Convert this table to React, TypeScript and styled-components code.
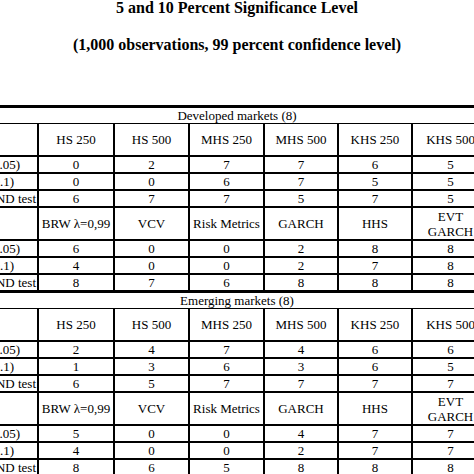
import React from "react";
import styled, { createGlobalStyle } from "styled-components";

const GlobalStyle = createGlobalStyle`
  html, body {
    margin: 0;
    padding: 0;
    overflow: hidden;
    background: #ffffff;
  }
  body {
    font-family: "Liberation Serif", "Times New Roman", serif;
    color: #000000;
  }
`;

const Page = styled.div`
  width: 474px;
  height: 474px;
  overflow: hidden;
`;

const Titles = styled.header`
  display: flex;
  flex-direction: column;
  align-items: center;
  gap: 21px;
  margin-bottom: 52px;
`;

const Title = styled.h1`
  margin: 0;
  font-size: 16px;
  line-height: 16px;
  font-weight: 700;
  white-space: nowrap;
`;

const Table = styled.table`
  border-collapse: separate;
  border-spacing: 0;
  table-layout: fixed;
  width: 488px;
  border-top: 2px solid #000;
  font-size: 13px;
  line-height: 15px;
`;

const Group = styled.tbody`
  & > tr > td {
    box-sizing: border-box;
    padding: 0;
  }
`;

const GroupCell = styled.td`
  height: 17px;
  border-top: 1px solid #000;
  border-bottom: 1px solid #000;
  text-align: center;
  padding-right: 14px !important;
  white-space: nowrap;
`;

const Cell = styled.td<{ $head?: boolean; $tall?: boolean }>`
  height: ${(p) => (p.$head ? 33 : 17)}px;
  border-right: 2px solid #000;
  border-bottom: 2px solid #000;
  text-align: center;
  vertical-align: middle;
  white-space: nowrap;
  &:last-child {
    border-right: none;
  }
`;

const LabelClip = styled.div<{ $inset: number }>`
  display: flex;
  justify-content: flex-end;
  overflow: hidden;
  white-space: nowrap;
  padding-right: ${(p) => p.$inset}px;
`;

const columnWidths = [39, 76, 75, 75, 74, 74, 75];

const headA = ["HS 250", "HS 500", "MHS 250", "MHS 500", "KHS 250", "KHS 500"];
const headB: React.ReactNode[] = [
  "BRW λ=0,99",
  "VCV",
  "Risk Metrics",
  "GARCH",
  "HHS",
  <>
    EVT
    <br />
    GARCH
  </>,
];

const labels = [
  { text: "LR uc (α=0.05)", inset: 17 },
  { text: "LR uc (α=0.1)", inset: 23 },
  { text: "LR IND test", inset: 1 },
];

type Block = { values: number[][] };

const groups: { name: string; blocks: [Block, Block] }[] = [
  {
    name: "Developed markets (8)",
    blocks: [
      { values: [[0, 2, 7, 7, 6, 5], [0, 0, 6, 7, 5, 5], [6, 7, 7, 5, 7, 5]] },
      { values: [[6, 0, 0, 2, 8, 8], [4, 0, 0, 2, 7, 8], [8, 7, 6, 8, 8, 8]] },
    ],
  },
  {
    name: "Emerging markets (8)",
    blocks: [
      { values: [[2, 4, 7, 4, 6, 6], [1, 3, 6, 3, 6, 5], [6, 5, 7, 7, 7, 7]] },
      { values: [[5, 0, 0, 4, 7, 7], [4, 0, 0, 2, 7, 7], [8, 6, 5, 8, 8, 8]] },
    ],
  },
];

function BlockRows({ head, block }: { head: React.ReactNode[]; block: Block }) {
  return (
    <>
      <tr>
        <Cell $head />
        {head.map((h, i) => (
          <Cell $head key={i}>
            {h}
          </Cell>
        ))}
      </tr>
      {block.values.map((row, r) => (
        <tr key={r}>
          <Cell>
            <LabelClip $inset={labels[r].inset}>{labels[r].text}</LabelClip>
          </Cell>
          {row.map((v, i) => (
            <Cell key={i}>{v}</Cell>
          ))}
        </tr>
      ))}
    </>
  );
}

export default function App() {
  return (
    <Page>
      <GlobalStyle />
      <Titles>
        <Title>5 and 10 Percent Significance Level</Title>
        <Title>(1,000 observations, 99 percent confidence level)</Title>
      </Titles>
      <Table>
        <colgroup>
          {columnWidths.map((w, i) => (
            <col key={i} style={{ width: w }} />
          ))}
        </colgroup>
        {groups.map((g) => (
          <Group key={g.name}>
            <tr>
              <GroupCell colSpan={7}>{g.name}</GroupCell>
            </tr>
            <BlockRows head={headA} block={g.blocks[0]} />
            <BlockRows head={headB} block={g.blocks[1]} />
          </Group>
        ))}
      </Table>
    </Page>
  );
}
